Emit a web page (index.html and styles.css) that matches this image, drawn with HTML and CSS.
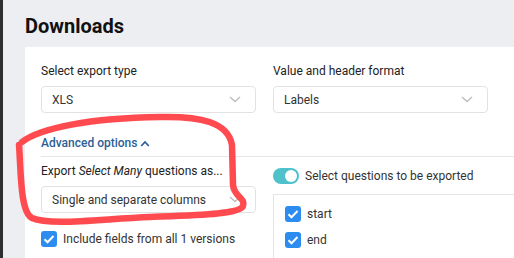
FILE: index.html
```html
<!DOCTYPE html>
<html>
<head>
<meta charset="utf-8">
<link rel="stylesheet" href="styles.css">
</head>
<body>
<div class="edge"></div>
<main class="main">
  <h1 class="title">Downloads</h1>
  <section class="card">
    <div class="row">
      <div class="col">
        <div class="label">Select export type</div>
        <div class="select"><span>XLS</span><svg class="chev" width="12" height="7" viewBox="0 0 12 7"><path d="M1 1l5 4.5L11 1" fill="none" stroke="#bdbdbd" stroke-width="1.4"/></svg></div>
      </div>
      <div class="col">
        <div class="label">Value and header format</div>
        <div class="select"><span>Labels</span><svg class="chev" width="12" height="7" viewBox="0 0 12 7"><path d="M1 1l5 4.5L11 1" fill="none" stroke="#bdbdbd" stroke-width="1.4"/></svg></div>
      </div>
    </div>
    <div class="adv">Advanced options <svg width="10" height="7" viewBox="0 0 10 7"><path d="M1.2 6L5 2l3.8 4" fill="none" stroke="#2c5f96" stroke-width="1.8"/></svg></div>
    <div class="row lower">
      <div class="col">
        <div class="label">Export <i>Select Many</i> questions as...</div>
        <div class="select"><span>Single and separate columns</span><svg class="chev" width="12" height="7" viewBox="0 0 12 7"><path d="M1 1l5 4.5L11 1" fill="none" stroke="#bdbdbd" stroke-width="1.4"/></svg></div>
        <label class="check incl"><span class="box"><svg width="12" height="10" viewBox="0 0 12 10"><path d="M1.5 5.2l3 3L10.5 2" fill="none" stroke="#fff" stroke-width="2"/></svg></span>Include fields from all 1 versions</label>
      </div>
      <div class="col wide">
        <div class="toggle-row"><span class="toggle"><span class="knob"></span></span>Select questions to be exported</div>
        <div class="qbox">
          <label class="check"><span class="box"><svg width="12" height="10" viewBox="0 0 12 10"><path d="M1.5 5.2l3 3L10.5 2" fill="none" stroke="#fff" stroke-width="2"/></svg></span>start</label>
          <label class="check"><span class="box"><svg width="12" height="10" viewBox="0 0 12 10"><path d="M1.5 5.2l3 3L10.5 2" fill="none" stroke="#fff" stroke-width="2"/></svg></span>end</label>
        </div>
      </div>
    </div>
  </section>
</main>
<svg class="scribble" width="514" height="258" viewBox="0 0 514 258"><path d="M22 142 C40 128 90 118 160 117 C200 116 228 122 232 145 L233 185 C234 197 246 198 243 206 C240 214 200 215 150 217 C100 219 50 226 32 218 C20 212 21 170 19 145" fill="none" stroke="#ff4b50" stroke-width="6.5" stroke-linecap="round" stroke-linejoin="round"/></svg>
</body>
</html>
```
FILE: styles.css
```css
html, body {
  margin: 0;
  padding: 0;
  width: 514px;
  height: 258px;
  overflow: hidden;
  background: #edeef1;
  font-family: Roboto, "Liberation Sans", sans-serif;
  color: #212121;
}
body {
  display: flex;
}
.edge {
  width: 3px;
  flex: none;
  background: #2e2e2e;
}
.main {
  padding-left: 22px;
  flex: none;
  width: 620px;
}
.title {
  margin: 0;
  height: 47px;
  box-sizing: border-box;
  padding-top: 14px;
  font-size: 20px;
  font-weight: 700;
  line-height: 24px;
  color: #111;
}
.card {
  background: #fff;
  padding: 16px 16px 40px;
}
.row {
  display: flex;
  gap: 17px;
}
.col {
  width: 215px;
  flex: none;
}
.col.wide {
  flex: 1;
  width: auto;
}
.label {
  font-size: 12px;
  line-height: 16px;
  margin-bottom: 7px;
  color: #222;
}
.select {
  height: 27px;
  box-sizing: border-box;
  border: 1px solid #e2e2e2;
  border-radius: 4px;
  display: flex;
  align-items: center;
  justify-content: space-between;
  padding: 0 14px 0 10px;
  font-size: 12px;
  color: #333;
}
.adv {
  margin-top: 23px;
  padding-bottom: 6px;
  border-bottom: 1px solid #e6e6e6;
  font-size: 12px;
  font-weight: 500;
  line-height: 14px;
  color: #2c5f96;
  display: flex;
  align-items: center;
  gap: 3px;
}
.lower {
  padding-top: 6px;
}
.check {
  display: flex;
  align-items: center;
  gap: 6px;
  font-size: 12px;
  line-height: 16px;
  color: #333;
}
.box {
  width: 16px;
  height: 16px;
  border-radius: 3px;
  background: #2d8cf0;
  display: flex;
  align-items: center;
  justify-content: center;
  flex: none;
}
.incl {
  margin-top: 18px;
}
.toggle-row {
  display: flex;
  align-items: center;
  gap: 6px;
  font-size: 12px;
  line-height: 16px;
  color: #333;
  margin-top: 5px;
}
.toggle {
  width: 26px;
  height: 16px;
  border-radius: 8px;
  background: #4fc1cb;
  position: relative;
  flex: none;
}
.knob {
  position: absolute;
  right: 2px;
  top: 2px;
  width: 12px;
  height: 12px;
  border-radius: 50%;
  background: #fff;
}
.qbox {
  margin-top: 10px;
  border-top: 1px solid #e6e6e6;
  border-left: 1px solid #e6e6e6;
  padding: 11px 11px;
  display: flex;
  flex-direction: column;
  gap: 10px;
}
.scribble {
  position: absolute;
  left: 0;
  top: 0;
  pointer-events: none;
}
```
